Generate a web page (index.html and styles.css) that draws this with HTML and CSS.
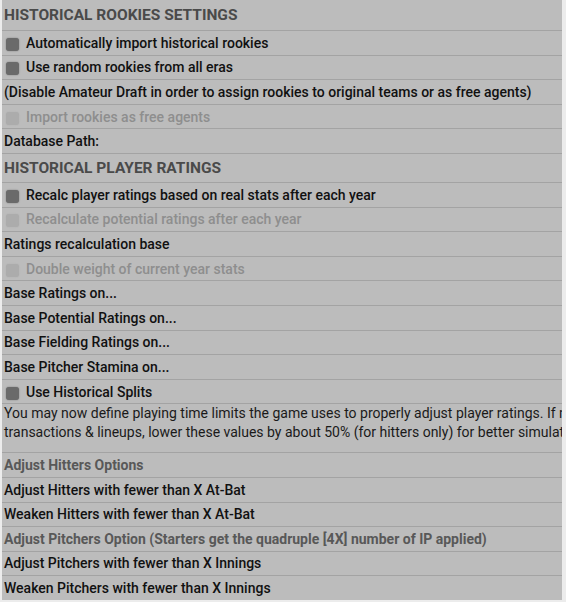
FILE: index.html
```html
<!DOCTYPE html>
<html lang="en">
<head>
  <meta charset="UTF-8" />
  <title>Historical Settings</title>
  <link rel="stylesheet" href="styles.css">
</head>
<body>

  <div class="panel">
    <div class="row header">HISTORICAL ROOKIES SETTINGS</div>
    <div class="row"><span class="box"></span>Automatically import historical rookies</div>
    <div class="row"><span class="box"></span>Use random rookies from all eras</div>
    <div class="row">(Disable Amateur Draft in order to assign rookies to original teams or as free agents)</div>
    <div class="row off"><span class="box"></span>Import rookies as free agents</div>
    <div class="row">Database Path:</div>

    <div class="row header second">HISTORICAL PLAYER RATINGS</div>
    <div class="row"><span class="box"></span>Recalc player ratings based on real stats after each year</div>
    <div class="row off"><span class="box"></span>Recalculate potential ratings after each year</div>
    <div class="row">Ratings recalculation base</div>
    <div class="row off"><span class="box"></span>Double weight of current year stats</div>
    <div class="row">Base Ratings on...</div>
    <div class="row">Base Potential Ratings on...</div>
    <div class="row">Base Fielding Ratings on...</div>
    <div class="row">Base Pitcher Stamina on...</div>
    <div class="row"><span class="box"></span>Use Historical Splits</div>

    <div class="row note">
      <p>You may now define playing time limits the game uses to properly adjust player ratings. If no historical</p>
      <p>transactions &amp; lineups, lower these values by about 50% (for hitters only) for better simulation results.</p>
    </div>

    <div class="row sub">Adjust Hitters Options</div>
    <div class="row">Adjust Hitters with fewer than X At-Bat</div>
    <div class="row">Weaken Hitters with fewer than X At-Bat</div>
    <div class="row sub">Adjust Pitchers Option (Starters get the quadruple [4X] number of IP applied)</div>
    <div class="row">Adjust Pitchers with fewer than X Innings</div>
    <div class="row last">Weaken Pitchers with fewer than X Innings</div>
  </div>

</body>
</html>
```

FILE: styles.css
```css
body {
  margin: 0;
  background-color: #ececec;
  font-family: Roboto, "Liberation Sans", sans-serif;
  overflow: hidden;
}

.panel {
  margin: 0 4px 2px 2px;
  height: 600px;
  background-color: #bcbcbc;
  overflow: hidden;
}

.row {
  display: flex;
  align-items: center;
  height: 23.6px;
  padding-left: 2px;
  border-bottom: 1px solid #a3a3a3;
  font-size: 14px;
  font-weight: 500;
  color: #111;
  white-space: nowrap;
}

.row.last {
  border-bottom: none;
}

.row.header {
  height: 30px;
  font-size: 15.5px;
  font-weight: 700;
  color: #4a4a4a;
}

.row.header.second {
  height: 28px;
}

.row.sub {
  font-weight: 700;
  color: #585858;
}

.row.off {
  color: #8e8e8e;
}

.box {
  width: 13px;
  height: 13px;
  margin: 3px 7px 0 2px;
  border-radius: 3px;
  background-color: #6a6a6a;
  box-shadow: 0 0 1.5px #6a6a6a;
}

.row.off .box {
  background-color: #acacac;
  box-shadow: 0 0 1.5px #acacac;
}

.row.note {
  display: block;
  height: 48px;
  font-weight: 400;
  color: #1a1a1a;
  overflow: hidden;
}

.note p {
  margin: 0;
  line-height: 19px;
}
```
